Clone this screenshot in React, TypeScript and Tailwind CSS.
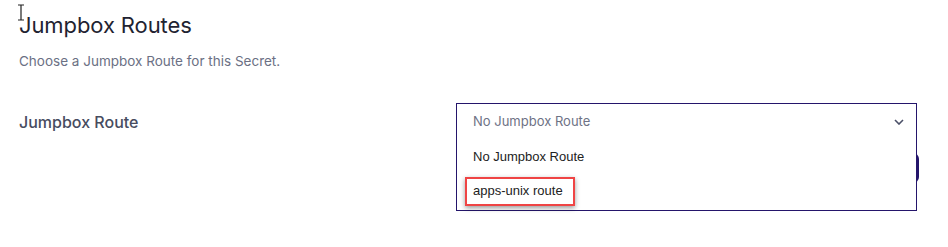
import React from "react";

export default function App() {
  return (
    <div className="relative w-[948px] h-[247px] bg-white pl-[19px] pr-[29px] pt-[10px] font-['Inter',sans-serif]">
      <svg className="absolute left-[17px] top-[4px]" width="8" height="17" viewBox="0 0 8 17">
        <path d="M1 1h6M4 1v15M1 16h6" stroke="#222" strokeWidth="1.2" fill="none" />
      </svg>
      <h1 className="text-[22px] leading-[30px] text-[#1f2331] tracking-[-0.1px]">Jumpbox Routes</h1>
      <p className="mt-[11px] text-[13.5px] leading-[20px] text-[#6b7084]">
        Choose a Jumpbox Route for this Secret.
      </p>
      <div className="mt-[32px] flex">
        <div className="w-[437px] pt-[9px] text-[16px] leading-[20px] font-medium text-[#474c60]">
          Jumpbox Route
        </div>
        <div className="relative w-[461px]">
          <div className="h-[37px] border-x border-t border-[#24156b] flex items-center justify-between pl-[16px] pr-[12px]">
            <span className="text-[13px] text-[#6e7285]">No Jumpbox Route</span>
            <svg width="10" height="6" viewBox="0 0 10 6">
              <path d="M1 1l4 4 4-4" stroke="#4b5068" strokeWidth="1.6" fill="none" />
            </svg>
          </div>
          <div className="absolute left-0 right-0 top-full z-10 bg-white border-x border-b border-[#24156b] pt-[2px] pb-[4px] font-['Liberation_Sans',Arial,sans-serif] text-[13px] text-[#222]">
            <div className="h-[30px] flex items-center pl-[16px]">No Jumpbox Route</div>
            <div className="mt-[5px] ml-[8px] inline-flex h-[29px] items-center px-[6px] pb-[2px] w-[110px] border-2 border-[#ef4444] shadow-[0_2px_5px_rgba(0,0,0,0.4)]">
              apps-unix route
            </div>
          </div>
        </div>
      </div>
      <div className="mt-[13px] flex justify-end">
        <div className="w-[100px] h-[30px] rounded-md bg-[#24156b]" />
      </div>
    </div>
  );
}
